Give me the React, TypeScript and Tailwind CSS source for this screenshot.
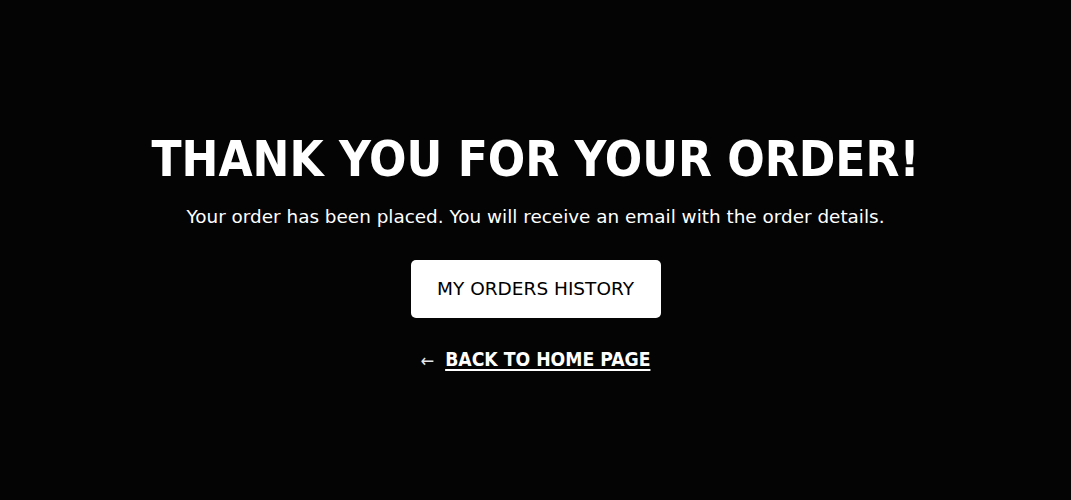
import React from "react";

export default function App() {
  return (
    <div
      className="w-full h-[500px] bg-[#040404] flex flex-col items-center justify-center text-white"
      style={{ fontFamily: '"DejaVu Sans Condensed", "DejaVu Sans", sans-serif' }}
    >
      <h1 className="text-[49px] leading-none font-bold mt-[10px]">
        THANK YOU FOR YOUR ORDER!
      </h1>
      <p
        className="text-[18.4px] mt-[24px] leading-none"
        style={{ fontFamily: '"DejaVu Sans", sans-serif' }}
      >
        Your order has been placed. You will receive an email with the order details.
      </p>
      <button
        className="mt-[34px] w-[250px] h-[58px] bg-white text-black rounded-[5px] text-[18.5px]"
        style={{ fontFamily: '"DejaVu Sans", sans-serif' }}
      >
        MY ORDERS HISTORY
      </button>
      <a href="#" className="mt-[28px] flex items-center gap-[11px] text-[19.2px] font-bold">
        <span className="text-[18px] font-normal text-gray-200">←</span>
        <span className="underline underline-offset-[3px] decoration-[2px]">BACK TO HOME PAGE</span>
      </a>
    </div>
  );
}
